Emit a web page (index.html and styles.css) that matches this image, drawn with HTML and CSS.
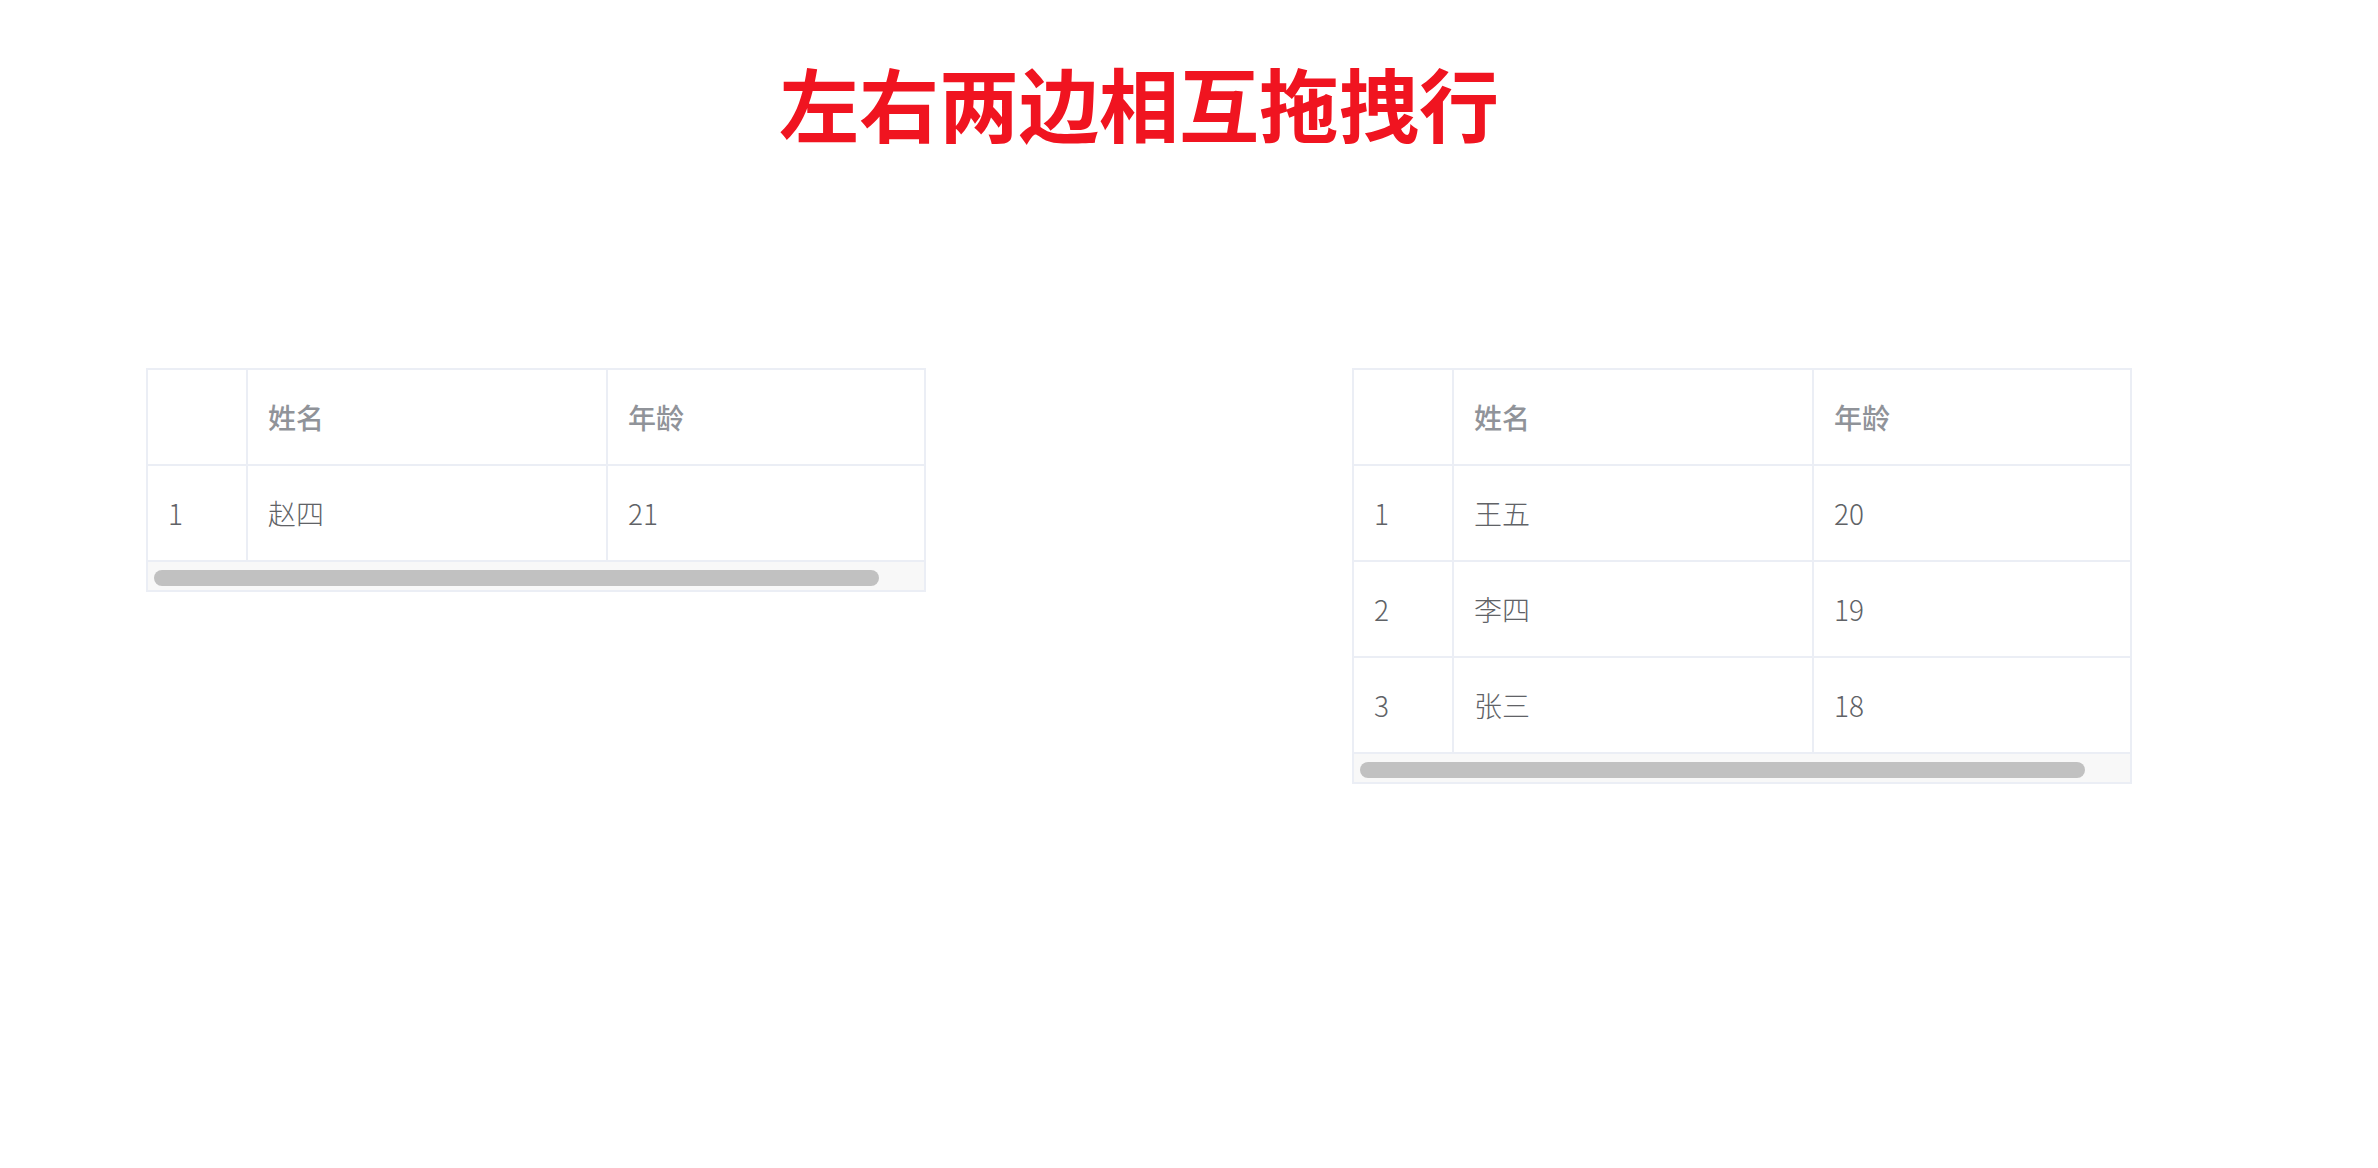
FILE: index.html
```html
<!DOCTYPE html>
<html lang="zh-CN">
<head>
<meta charset="utf-8">
<title>左右两边相互拖拽行</title>
<link rel="stylesheet" href="styles.css">
</head>
<body>
<h1 class="title">左右两边相互拖拽行</h1>
<div class="tables">
  <div class="table">
    <div class="row head">
      <div class="cell c1"></div>
      <div class="cell c2">姓名</div>
      <div class="cell c3">年龄</div>
    </div>
    <div class="row">
      <div class="cell c1">1</div>
      <div class="cell c2">赵四</div>
      <div class="cell c3">21</div>
    </div>
    <div class="track"><div class="thumb"></div></div>
  </div>
  <div class="table">
    <div class="row head">
      <div class="cell c1"></div>
      <div class="cell c2">姓名</div>
      <div class="cell c3">年龄</div>
    </div>
    <div class="row">
      <div class="cell c1">1</div>
      <div class="cell c2">王五</div>
      <div class="cell c3">20</div>
    </div>
    <div class="row">
      <div class="cell c1">2</div>
      <div class="cell c2">李四</div>
      <div class="cell c3">19</div>
    </div>
    <div class="row">
      <div class="cell c1">3</div>
      <div class="cell c2">张三</div>
      <div class="cell c3">18</div>
    </div>
    <div class="track"><div class="thumb"></div></div>
  </div>
</div>
</body>
</html>
```
FILE: styles.css
```css
html, body {
  margin: 0;
  padding: 0;
  background: #ffffff;
}
body {
  font-family: "Noto Sans CJK SC", "Noto Sans", sans-serif;
}
.title {
  margin: 0;
  padding: 61px 100px 0 0;
  font-size: 80px;
  line-height: 80px;
  font-weight: 700;
  color: #f01420;
  text-align: center;
}
.tables {
  display: flex;
  align-items: flex-start;
  gap: 426px;
  padding-left: 146px;
  margin-top: 227px;
}
.table {
  width: 776px;
  border: 2px solid #ebeef5;
  background: #fff;
}
.row {
  display: flex;
  height: 96px;
}
.cell {
  box-sizing: border-box;
  height: 96px;
  border-bottom: 2px solid #ebeef5;
  display: flex;
  align-items: center;
  padding-left: 20px;
  font-size: 28px;
  font-weight: 300;
  color: #606266;
  line-height: 46px;
}
.c1 {
  width: 100px;
  border-right: 2px solid #ebeef5;
}
.c2 {
  width: 360px;
  border-right: 2px solid #ebeef5;
}
.c3 {
  width: 316px;
}
.head .cell {
  color: #909399;
  font-weight: 500;
}
.track {
  height: 28px;
  background: #f8f8f8;
  padding: 8px 0 0 6px;
  box-sizing: border-box;
}
.thumb {
  width: 725px;
  height: 16px;
  border-radius: 8px;
  background: #c1c1c1;
}
```
